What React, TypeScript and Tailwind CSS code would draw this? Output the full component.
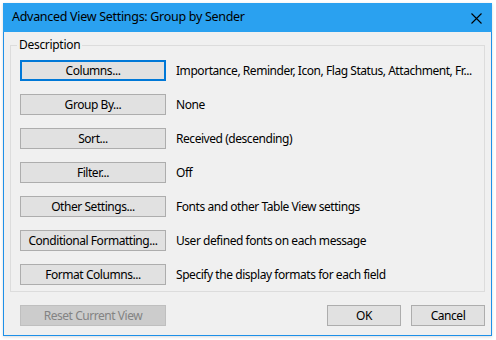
import React from 'react';

const rows = [
  { label: 'Columns...', text: 'Importance, Reminder, Icon, Flag Status, Attachment, Fr...', focus: true },
  { label: 'Group By...', text: 'None' },
  { label: 'Sort...', text: 'Received (descending)' },
  { label: 'Filter...', text: 'Off' },
  { label: 'Other Settings...', text: 'Fonts and other Table View settings' },
  { label: 'Conditional Formatting...', text: 'User defined fonts on each message' },
  { label: 'Format Columns...', text: 'Specify the display formats for each field' },
];

function WinButton({ label, focus, disabled, width }: { label: string; focus?: boolean; disabled?: boolean; width: string }) {
  const base = 'h-[21px] shrink-0 flex items-center justify-center text-[12px] tracking-[-0.45px] leading-none whitespace-nowrap';
  if (disabled) {
    return <div className={`${base} ${width} bg-[#cccccc] border border-[#bfbfbf] text-[#838383]`}>{label}</div>;
  }
  return (
    <div
      className={`${base} ${width} bg-[#e1e1e1] text-black ${
        focus ? 'border-2 border-[#0078d7]' : 'border border-[#adadad]'
      }`}
    >
      {label}
    </div>
  );
}

export default function App() {
  return (
    <div className="w-[496px] h-[340px] bg-white p-[3px] font-['Noto_Sans',sans-serif]">
      <div className="w-[489px] h-[333px] flex flex-col bg-[#f0f0f0] border border-[#1e90e8] shadow-[0_1px_3px_rgba(0,0,0,0.15)]">

        {/* Title bar */}
        <div className="h-[29px] -mt-px -mx-px flex items-center justify-between bg-[#2aa1f0] pl-[9px] pr-[10px]">
          <span className="text-[12.5px] tracking-[-0.3px] text-black">Advanced View Settings: Group by Sender</span>
          <svg width="11" height="11" viewBox="0 0 11 11" className="mt-[1px]">
            <path d="M0.5 0.5 L10.5 10.5 M10.5 0.5 L0.5 10.5" stroke="#000" strokeWidth="1.1" />
          </svg>
        </div>

        {/* Description group */}
        <fieldset className="mx-[6px] mt-[6px] border border-[#dcdcdc] pl-[9px] pr-[9px] pt-[8px] pb-[6px]">
          <legend className="ml-[-3px] px-[2px] text-[12px] tracking-[-0.3px] leading-[14px] text-black">Description</legend>
          <div className="flex flex-col gap-[13px]">
            {rows.map((r) => (
              <div key={r.label} className="flex items-center gap-[10px]">
                <WinButton label={r.label} focus={r.focus} width="w-[146px]" />
                <span className="text-[12px] tracking-[-0.45px] text-black whitespace-nowrap">{r.text}</span>
              </div>
            ))}
          </div>
        </fieldset>

        {/* Footer buttons */}
        <div className="mt-[13px] mx-[6px] pl-[10px] flex items-center">
          <WinButton label="Reset Current View" disabled width="w-[146px]" />
          <div className="flex-1" />
          <div className="flex gap-[10px]">
            <WinButton label="OK" width="w-[74px]" />
            <WinButton label="Cancel" width="w-[74px]" />
          </div>
        </div>
      </div>
    </div>
  );
}
